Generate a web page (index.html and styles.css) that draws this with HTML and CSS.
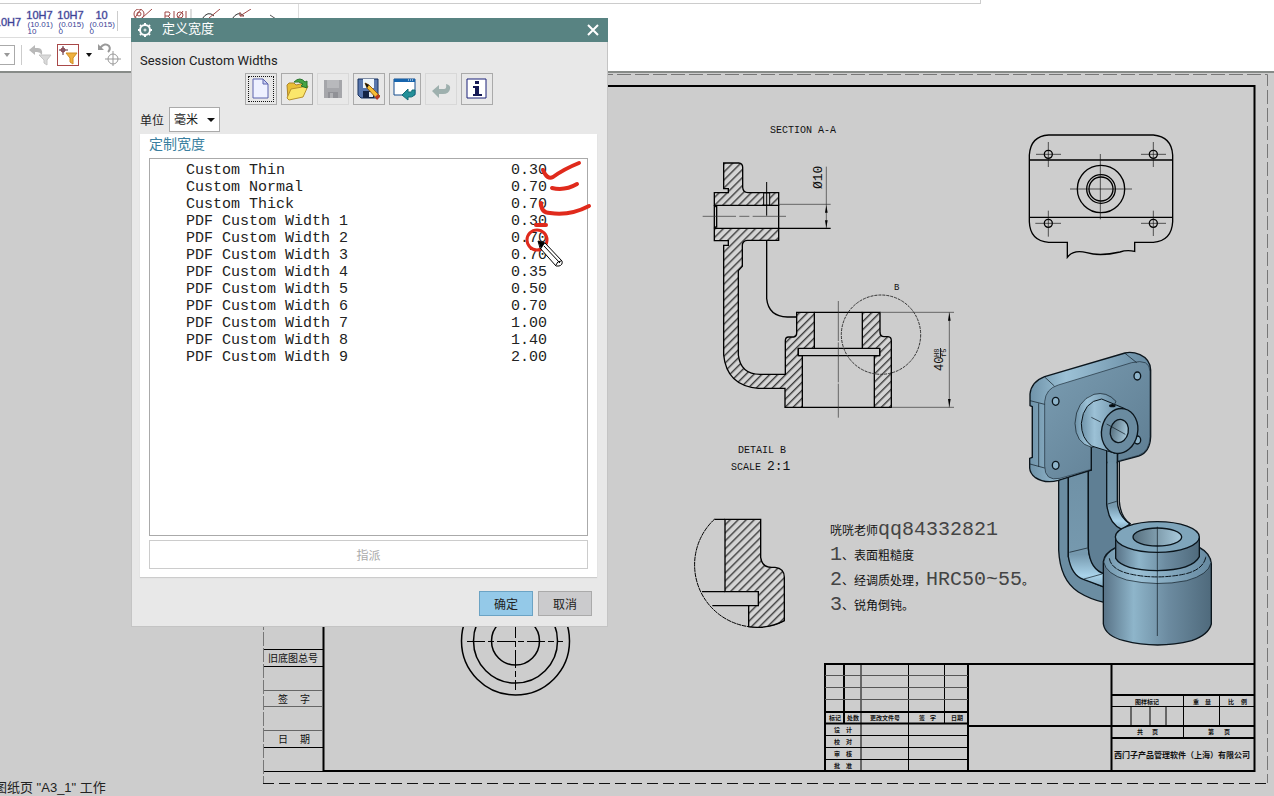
FILE: index.html
```html
<!DOCTYPE html>
<html lang="zh-CN">
<head>
    <meta charset="utf-8">
    <title>定义宽度</title>
    <link rel="stylesheet" href="styles.css">
</head>
<body>
    <header class="toolbars">
        <div class="ribbon-edge"></div>
        <div class="toolbar toolbar-top">
            <button type="button" class="tol single"><b>10H7</b></button>
            <button type="button" class="tol"><b>10H7</b><span>(10.01)</span><span>10</span></button>
            <button type="button" class="tol"><b>10H7</b><span>(0.015)</span><span>0</span></button>
            <button type="button" class="tol"><b>10</b><span>(0.015)</span><span>0</span></button>
            <i class="sep"></i>
            <svg class="marks" viewBox="0 0 160 24" fill="none" stroke="#a04846">
                <circle cx="10" cy="5" r="5"/><circle cx="10" cy="5" r="2"/><path d="M5 10 12 0M13 9 23 0"/>
                <path d="M36 10V3h4q2 1 0 4h-4m3 0 3 3M45 2v8M57 2v8M48 10 54 2"/><circle cx="51" cy="6" r="3"/>
                <path d="M62 0v10" stroke="#bbb"/>
                <path d="M73 10q6-9 12-3" stroke="#333"/><path d="M80 9 91 0"/>
                <path d="M103 10q6-9 12-3" stroke="#333"/><path d="M111 7 122 0m-11 3v4h4"/>
                <path d="m141 6 6 4-4 3" stroke="#555"/>
            </svg>
        </div>
        <div class="toolbar toolbar-bottom">
            <button type="button" class="drop" aria-label="类型"></button>
            <i class="sep"></i>
            <button type="button" class="tool" aria-label="重置过滤器">
                <svg width="24" height="24" viewBox="0 0 24 24">
                    <path d="m1 7 6-5v3h3q5 0 4 7-2-3-5-3H7v3z" fill="#b9b9b9"/>
                    <path d="M11 12h12l-4 5v5l-3-2v-3z" fill="#d9d9d9" stroke="#c4c4c4"/>
                </svg>
            </button>
            <button type="button" class="tool active" aria-label="过滤器">
                <svg width="20" height="20" viewBox="0 0 20 20">
                    <path d="M5 1v9M1 5h9" stroke="#55263a"/><circle cx="5" cy="5" r="2" fill="none" stroke="#7c2c35"/>
                    <path d="M8 8h11l-4 5v6l-3-2v-4z" fill="#efb13f" stroke="#d08e25"/>
                </svg>
            </button>
            <button type="button" class="caret" aria-label="更多"></button>
            <button type="button" class="tool" aria-label="捕捉">
                <svg width="24" height="26" viewBox="0 0 24 26" fill="none" stroke="#999">
                    <path d="M2 6q5-6 9-2 2 3-1 6" stroke-width="2"/><path d="M0 2v6h6z" fill="#999" stroke="none"/>
                    <circle cx="15" cy="17" r="5"/><path d="M15 9v15M7 17h16"/>
                </svg>
            </button>
        </div>
    </header>

    <main class="canvas">
        <svg class="sheet" viewBox="0 73 1274 723" preserveAspectRatio="xMinYMin meet">
            <defs>
                <pattern id="hatch" width="17" height="17" patternUnits="userSpaceOnUse" patternTransform="rotate(45)">
                    <rect width="17" height="17" fill="#d5d5d5"/>
                    <path d="M8 0V17" stroke="#000" stroke-width="3"/>
                </pattern>
                <linearGradient id="body" x1="0" x2="1">
                    <stop offset="0" stop-color="#587286"/><stop offset=".28" stop-color="#8eb5ca"/>
                    <stop offset=".6" stop-color="#6c8ba0"/><stop offset="1" stop-color="#4f6a7c"/>
                </linearGradient>
                <linearGradient id="bore" x1="0" x2="1">
                    <stop offset="0" stop-color="#57707f"/><stop offset="1" stop-color="#a9cbdd"/>
                </linearGradient>
                <linearGradient id="face" x1="0" x2="1" y1="0" y2="1">
                    <stop offset="0" stop-color="#7a9cb1"/><stop offset="1" stop-color="#5d7c91"/>
                </linearGradient>
                <linearGradient id="bend" x1="0" x2="0" y1="0" y2="1">
                    <stop offset="0" stop-color="#6f91a6"/><stop offset=".72" stop-color="#7699ae"/><stop offset=".9" stop-color="#a9d3ea"/><stop offset="1" stop-color="#82a8be"/>
                </linearGradient>
                <linearGradient id="rim" x1="0" x2="1">
                    <stop offset="0" stop-color="#6f93a9"/><stop offset=".3" stop-color="#9cc1d6"/><stop offset="1" stop-color="#6689a0"/>
                </linearGradient>
            </defs>

            <!-- sheet border and frame -->
            <g fill="none" stroke="#777">
                <path d="M131 74.500H1267.500V783" stroke-dasharray="14 4"/>
                <path d="M263.500 600V783" stroke-dasharray="14 2"/>
                <path d="M263 783.500H1268" stroke="#111" stroke-dasharray="11 5"/>
            </g>
            <path d="M323.500 600V771H1254.500V86H323" fill="none" stroke="#000" stroke-width="2"/>

            <!-- side strip -->
            <path d="M264 649.500H323M264 666.500H323M264 747.500H323M264 771.500H323" stroke="#000"/>
            <path d="M264 690.500H323M264 706.500H323M264 730.500H323" stroke="#666"/>
            <g class="cad">
                <text x="268" y="662" font-size="10">旧底图总号</text>
                <text x="278" y="703" font-size="10">签</text><text x="300" y="703" font-size="10">字</text>
                <text x="278" y="743" font-size="10">日</text><text x="300" y="743" font-size="10">期</text>
            </g>

            <!-- bottom view -->
            <g fill="none" stroke="#000" stroke-width="1.500">
                <circle cx="515.500" cy="641" r="54"/>
                <circle cx="515.500" cy="641" r="42"/>
                <circle cx="515.500" cy="641" r="24"/>
                <path d="M467 641.500H563M515.500 590V690" stroke-width="1" stroke-dasharray="18 3 6 3"/>
            </g>

            <!-- section A-A -->
            <svg x="680" y="100" width="300" height="320" viewBox="0 0 900 960">
                <g fill="url(#hatch)" stroke="#000" stroke-width="4">
                    <path d="M131 189H176Q188 190 188 202V262Q189 278 204 278H296V316H103V278H145V266H131Z"/>
                    <path d="M103 385H296V421H202Q188 422 187 435V499L175 512V765Q182 823 240 823H316V722Q316 711 326 711H341Q350 710 350 700V637H403V745H355V767H367V922H315V865H235Q140 857 131 765V436H145V422H103Z"/>
                    <path d="M547 637H600V698Q601 710 612 710H624Q634 711 634 722V922H583V767H599V745H547Z"/>
                </g>
                <rect x="251" y="279" width="18" height="36" fill="#cdcdcd" stroke="#000" stroke-width="3"/>
                <g fill="none" stroke="#000" stroke-width="4">
                    <path d="M103 316V385M296 316V385M110 318V383M103 316 110 322M103 385 110 379"/>
                    <path d="M260 422V596Q266 650 322 651H350"/>
                    <path d="M403 637H547M403 745H547M355 767H599M355 745V767M599 745V767M367 922H583"/>
                </g>
                <g fill="none" stroke="#333" stroke-width="2">
                    <path d="M68 349H327" stroke-dasharray="100 10 30 10"/>
                    <path d="M260 246V347" stroke="#000" stroke-width="3"/>
                    <path d="M475 603V953" stroke-dasharray="120 4"/>
                    <path d="M296 313H452M439 200V385M600 637H822M634 922H822M808 637V922"/>
                    <path d="M296 385H452" stroke="#000" stroke-width="4"/>
                    <circle cx="603" cy="704" r="119" stroke-dasharray="9 3" stroke-width="3"/>
                </g>
                <path d="m439 316-4 22h8zM439 383l-4-22h8zM808 638l-4 24h8zM808 921l-4-24h8z"/>
            </svg>
            <g class="cad mono">
                <text x="770" y="133" font-size="10">SECTION A-A</text>
                <text x="894" y="290" font-size="9">B</text>
                <text transform="translate(822 189) rotate(-90)" font-size="13">Ø10</text>
                <text transform="translate(943 371) rotate(-90)" font-size="12">40</text>
                <text transform="translate(939 357) rotate(-90)" font-size="7">H8</text>
                <text transform="translate(946 357) rotate(-90)" font-size="7">f5</text>
                <text x="738" y="453" font-size="10">DETAIL B</text>
                <text x="731" y="470" font-size="10">SCALE <tspan font-size="13">2:1</tspan></text>
            </g>
            <path d="M940.500 348V358" stroke="#222"/>

            <!-- plate, top view -->
            <svg x="1010" y="70" width="264" height="200" viewBox="0 0 792 600">
                <g fill="none" stroke="#000" stroke-width="4">
                    <path d="M172 517H116Q60 512 58 455V255Q62 198 116 195H430Q485 200 488 255V455Q485 512 430 517H374V544Q350 539 330 546 270 560 230 548 190 538 172 562Z"/>
                    <path d="M58 270H488M58 442H488"/>
                    <circle cx="273" cy="357" r="71"/><circle cx="273" cy="357" r="43"/><circle cx="273" cy="357" r="36"/>
                    <circle cx="115" cy="253" r="12"/><circle cx="430" cy="253" r="12"/>
                    <circle cx="115" cy="460" r="12"/><circle cx="430" cy="460" r="12"/>
                </g>
                <path d="M78 253H153M115 216V291M393 253H468M430 216V291M76 460H153M115 422V500M393 460H468M430 422V498M180 357H366M271 252V448" stroke="#111" stroke-width="2"/>
            </svg>

            <!-- detail B -->
            <svg x="680" y="430" width="120" height="210" viewBox="0 0 360 630">
                <path d="M103 268A187 187 0 0 0 314 572" fill="none" stroke="#000" stroke-width="3" stroke-dasharray="14 2"/>
                <path d="M135 268H242V382Q246 412 275 412H285Q313 415 313 442V572Q280 590 240 592 222 593 206 590V527H235V485H135Z" fill="url(#hatch)" stroke="#000" stroke-width="4"/>
                <path d="M103 268H135M66 485H135M97 527H206" stroke="#000" stroke-width="4"/>
            </svg>

            <g class="cad note">
                <text x="830" y="535">咣咣老师<tspan class="wide">qq84332821</tspan></text>
                <text x="830" y="560"><tspan class="wide">1</tspan>、表面粗糙度</text>
                <text x="830" y="585"><tspan class="wide">2</tspan>、经调质处理，<tspan class="wide">HRC50~55</tspan>。</text>
                <text x="830" y="610"><tspan class="wide">3</tspan>、锐角倒钝。</text>
            </g>

            <!-- shaded bracket -->
            <svg x="1010" y="340" width="220" height="320" viewBox="0 0 660 960">
                <g stroke="#0b151c" stroke-width="4" stroke-linejoin="round">
                    <path d="M146 408V630Q150 720 205 756 240 778 285 788V742Q190 712 175 650V400Z" fill="#6b8da2"/>
                    <path d="M175 400V650Q184 706 220 718L285 742V700Q240 682 235 625V390Z" fill="url(#bend)"/>
                    <path d="M235 390V625Q240 690 285 702L330 640 360 556Q300 540 290 490V310H244V390Z" fill="#5f7f94"/>
                    <path d="M290 320V490Q295 550 335 568L360 552Q324 528 322 482V335Z" fill="url(#bend)"/>
                    <path d="M328 360V484Q332 534 362 552" fill="none"/>
                    <path d="M60 197V162Q64 125 104 110L345 39Q366 34 390 44 421 58 422 90V290Q420 336 386 348L324 365V300H244V390L145 421Q105 432 75 412 60 400 59 384V355L67 352V200Z" fill="url(#rim)"/>
                    <path d="M104 185Q107 146 145 135L365 68Q420 55 420 95V290Q419 334 386 346L324 363V300H244V388L150 415Q104 425 104 378Z" fill="url(#face)" stroke="#1b2b36" stroke-width="2"/>
                    <path d="M60 182 104 193M60 372 104 384M104 111 133 138M345 40 380 68M67 200V352M86 190V380" fill="none" stroke-width="2"/>
                    <path d="M246 302H322V345H290V360H246Z" fill="#5f7f94" stroke="none"/>
                    <path d="M291 320H321V365H291Z" fill="#7092a7" stroke="none"/>
                    <path d="M244 318V390M290 325V370M322 335V370" fill="none"/>
                    <ellipse cx="137" cy="184" rx="10" ry="12" fill="#8fb5cb"/><ellipse cx="382" cy="108" rx="10" ry="12" fill="#8fb5cb"/>
                    <ellipse cx="137" cy="376" rx="10" ry="12" fill="#8fb5cb"/><ellipse cx="382" cy="300" rx="10" ry="12" fill="#8fb5cb"/>
                    <path d="M245 322Q196 310 195 250 198 182 252 163 290 153 318 184L250 322Z" fill="url(#rim)" stroke-width="2"/>
                    <path d="M214 250Q220 184 275 177L345 206 315 340 245 318Q214 295 214 250Z" fill="url(#rim)" stroke-width="3"/>
                    <ellipse cx="329" cy="273" rx="54" ry="68" transform="rotate(12 329 273)" fill="#6a8ba0"/>
                    <ellipse cx="328" cy="273" rx="27" ry="35" transform="rotate(12 328 273)" fill="url(#bore)"/>
                    <ellipse cx="307" cy="197" rx="8" ry="3"/>
                    <path d="M244 232 272 246M290 252 346 283M178 637 232 624M222 717 276 702M293 492 320 484" fill="none" stroke-width="2"/>
                    <path d="M280 665Q282 640 318 622H568Q602 640 604 672V852Q596 884 545 902 442 928 342 902 286 888 280 852Z" fill="url(#body)"/>
                    <path d="M281 666Q286 640 318 624H568Q598 640 603 668 596 704 530 722 442 740 350 720 288 702 281 666Z" fill="url(#rim)" stroke-width="2"/>
                    <path d="M298 655Q304 692 370 704 442 718 520 703 582 690 588 648" fill="none" stroke-width="3" stroke-dasharray="18 3"/>
                    <path d="M317 592V655Q338 690 442 692 548 690 568 650V592Z" fill="url(#body)"/>
                    <ellipse cx="442" cy="591" rx="126" ry="46" fill="#7fa5bb"/>
                    <ellipse cx="442" cy="591" rx="73" ry="27" fill="url(#bore)"/>
                    <path d="M442 560V888" fill="none" stroke-width="2"/>
                </g>
            </svg>

            <!-- title block -->
            <g fill="none" stroke="#000">
                <path d="M825 771V664H1254M844 664V723M968 664V771M1111.500 664V771M968 726H1254M1111 695H1254M1111 738H1254M825 712H968M825 723.500H968" stroke-width="2"/>
                <path d="M861 664V771M908.500 664V771M944.500 664V723M825 735.500H968M825 747.500H968M825 759.500H968M1111 706.500H1254M1131 707V726M1150 707V726M1166 707V726M1183.500 695V738M1219.500 695V726"/>
                <path d="M825 675.500H968M825 687.500H968M825 699.500H968" stroke="#555"/>
            </g>
            <g class="cad tiny">
                <text x="829" y="720">标记</text><text x="847" y="720">处数</text><text x="870" y="720">更改文件号</text>
                <text x="919" y="720">签</text><text x="930" y="720">字</text><text x="951" y="720">日期</text>
                <text x="834" y="732">设</text><text x="846" y="732">计</text>
                <text x="834" y="744">校</text><text x="846" y="744">对</text>
                <text x="834" y="756">审</text><text x="846" y="756">核</text>
                <text x="834" y="768">批</text><text x="846" y="768">准</text>
                <text x="1135" y="704">图样标记</text>
                <text x="1193" y="704">重</text><text x="1205" y="704">量</text>
                <text x="1228" y="704">比</text><text x="1241" y="704">例</text>
                <text x="1137" y="734">共</text><text x="1152" y="734">页</text>
                <text x="1208" y="734">第</text><text x="1224" y="734">页</text>
                <text x="1114" y="758" font-size="8">西门子产品管理软件（上海）有限公司</text>
            </g>
            <text class="status" x="-6" y="792">图纸页 "A3_1" 工作</text>
        </svg>
    </main>

    <form class="dialog">
        <div class="titlebar">
            <svg width="16" height="16" viewBox="0 0 16 16" fill="none" stroke="#fff">
                <circle cx="8" cy="8" r="5" stroke-width="2"/><circle cx="8" cy="8" r="1"/>
                <path d="M8 1v2M8 13v2M1 8h2M13 8h2M3 3l1 1M12 12l1 1M13 3l-1 1M4 12l-1 1" stroke-width="2"/>
            </svg>
            <h1>定义宽度</h1>
            <button type="button" class="close" aria-label="关闭">
                <svg width="12" height="12" viewBox="0 0 12 12"><path d="M1 1 11 11M11 1 1 11" stroke="#fff" stroke-width="2"/></svg>
            </button>
        </div>
        <p class="session">Session Custom Widths</p>
        <div class="actions">
            <button type="button" class="focused" aria-label="新建">
                <svg viewBox="0 0 24 24"><path d="M4 2h10l5 5v14H4z" fill="#eef1ff" stroke="#5a62ad"/><path d="M14 2v5h5z" fill="#c9d0f3" stroke="#5a62ad"/></svg>
            </button>
            <button type="button" aria-label="打开">
                <svg viewBox="0 0 24 24"><path d="M2 8 4 6h5l2 2 9-2v4l-3 9-14 3z" fill="#e9bf36" stroke="#ac852b"/><path d="M2 21 6 12l17-3-5 11-14 3z" fill="#fbe66b" stroke="#b8912e"/><path d="M9 5q6-6 11 0l2-1v7l-6-2 2-2q-4-3-9-2z" fill="#45a445" stroke="#28752d"/></svg>
            </button>
            <button type="button" disabled aria-label="保存">
                <svg viewBox="0 0 24 24"><path d="M3 3h18v18H3z" fill="#a5a6aa"/><path d="M6 3h12v8H6z" fill="#b8b9bc"/><path d="M7 15h10v6H7z" fill="#909196"/><path d="M9 16h3v5H9z" fill="#b0b1b4"/></svg>
            </button>
            <button type="button" aria-label="另存为">
                <svg viewBox="0 0 24 24"><path d="M1 2h20v19H4l-3-3z" fill="#5876ad" stroke="#16305f"/><path d="M6 2h11v9H6z" fill="#edf5fc"/><path d="M6 14h11v7H6z" fill="#142444"/><path d="M12 15h4v5h-4z" fill="#dde6f0"/><path d="m8 6 2 5 10 11 3-3L12 8z" fill="#f5bd35" stroke="#966016"/><path d="m8 6 2 5 2-3z" fill="#111"/><path d="m18 20 2 3 3-3-2-3z" fill="#b83724"/></svg>
            </button>
            <button type="button" aria-label="应用">
                <svg viewBox="0 0 24 24"><path d="M1 2h21v16H1z" fill="#fff" stroke="#154d8d"/><path d="M1 2h21v3H1z" fill="#1765ad"/><path d="M15 3h1m1 0h1m1 0h1" stroke="#fff"/><path d="m9 18 6-6v3h3q1 0 1-2h3q1 8-7 7v3z" fill="#239099" stroke="#136c76"/></svg>
            </button>
            <button type="button" disabled aria-label="撤消">
                <svg viewBox="0 0 24 24"><path d="m3 14 7-6v4h5q3 0 2-5 5 1 4 5-1 5-7 5h-4v4z" fill="#9eb0ae"/></svg>
            </button>
            <button type="button" aria-label="信息">
                <svg viewBox="0 0 24 24"><path d="M2 2h19v19H2z" fill="#fff" stroke="#1b2179"/><path d="M10 4h4v3h-4zM8 9h6v8h3v2H8v-2h2v-6H8z" fill="#151955"/></svg>
            </button>
        </div>
        <div class="unit-row">
            <label for="unit">单位</label>
            <span class="select-box">
                <select id="unit"><option>毫米</option><option>英寸</option></select>
            </span>
        </div>
        <section class="panel">
            <h2>定制宽度</h2>
            <div class="list">
                <table>
                    <tr><td>Custom Thin</td><td>0.30</td></tr>
                    <tr><td>Custom Normal</td><td>0.70</td></tr>
                    <tr><td>Custom Thick</td><td>0.70</td></tr>
                    <tr><td>PDF Custom Width 1</td><td>0.30</td></tr>
                    <tr><td>PDF Custom Width 2</td><td>0.70</td></tr>
                    <tr><td>PDF Custom Width 3</td><td>0.70</td></tr>
                    <tr><td>PDF Custom Width 4</td><td>0.35</td></tr>
                    <tr><td>PDF Custom Width 5</td><td>0.50</td></tr>
                    <tr><td>PDF Custom Width 6</td><td>0.70</td></tr>
                    <tr><td>PDF Custom Width 7</td><td>1.00</td></tr>
                    <tr><td>PDF Custom Width 8</td><td>1.40</td></tr>
                    <tr><td>PDF Custom Width 9</td><td>2.00</td></tr>
                </table>
            </div>
            <button type="button" class="assign" disabled>指派</button>
        </section>
        <div class="buttons">
            <button type="button" class="ok">确定</button>
            <button type="button">取消</button>
        </div>

        <!-- pen marks over the list -->
        <svg class="ink" width="72" height="120" viewBox="0 0 72 120">
            <g fill="none" stroke="#e02a1c" stroke-width="4" stroke-linecap="round">
                <path d="M23 20Q27 30 33 27 44 19 59 13"/>
                <path d="M32 38Q45 41 57 34"/>
                <path d="M21 53Q21 63 30 63 50 66 69 56"/>
                <path d="M16 75H26"/>
                <circle cx="17" cy="90" r="10" stroke-width="3"/>
            </g>
            <path d="m18 91 7 2 17 18q1 4-3 5h-3L20 98z" fill="#fff" stroke="#000"/>
            <path d="m18 91 7 2-4 6z"/>
            <path d="m24 96 16 17M36 115q1-4 5-4" fill="none" stroke="#000"/>
        </svg>
    </form>
</body>
</html>
```
FILE: styles.css
```css
* {
    box-sizing: border-box;
}

body {
    margin: 0;
    height: 100vh;
    display: flex;
    flex-direction: column;
    overflow: hidden;
    position: relative;
    background: #cdcdcd;
    color: #222;
    font-family: Roboto, "Noto Sans CJK SC", sans-serif;
    font-size: 12px;
}

button, select {
    font: inherit;
    color: inherit;
    padding: 0;
}

h1, h2, p {
    margin: 0;
    font-weight: normal;
}

/* Toolbars */
.toolbars {
    background: #fff;
    border-bottom: 2px solid #878b88;
}

.ribbon-edge {
    width: 77%;
    height: 4px;
    border-right: 1px solid #ccc;
    border-bottom: 1px solid #ccc;
}

.toolbar {
    display: flex;
    align-items: center;
}

.toolbar button {
    border: none;
    background: none;
}

.toolbar-top {
    width: 299px;
    height: 34px;
    border-right: 1px solid #ddd;
    border-bottom: 1px solid #ddd;
}

.toolbar-bottom {
    height: 33px;
}

.toolbar .tol {
    display: flex;
    flex-direction: column;
    align-items: center;
    width: 31px;
    padding-top: 2px;
    color: #3b3f96;
    font-family: "Liberation Sans", sans-serif;
    font-size: 8px;
    line-height: 7px;
}

.tol b {
    font-size: 11px;
    line-height: 12px;
    font-weight: normal;
    -webkit-text-stroke: 1px #3b3f9655;
}

.tol span {
    width: 24px;
    text-align: left;
}

.toolbar .single {
    width: 26px;
    margin-left: -5px;
    margin-right: 3px;
}

.sep {
    width: 1px;
    height: 20px;
    background: #ccc;
}

.marks {
    width: 160px;
    height: 24px;
    margin-left: 11px;
}

.drop {
    width: 15px;
    height: 20px;
    margin-right: 6px;
}

.toolbar .drop {
    border: 1px solid #aaa;
    border-left: none;
}

.drop::after, .caret::after {
    content: "";
    display: block;
    width: 0;
    margin: auto;
    border: 3px solid transparent;
    border-top: 4px solid #999;
    border-bottom: none;
}

.caret {
    width: 19px;
}

.caret::after {
    border-top-color: #111;
}

.tool {
    display: flex;
    align-items: center;
    justify-content: center;
    width: 24px;
    height: 26px;
    margin-left: 6px;
}

.toolbar .active {
    width: 22px;
    height: 22px;
    margin-left: 5px;
    border: 1px solid #a94848;
}

.caret + .tool {
    margin-left: 0;
}

/* Drawing */
.canvas {
    flex: 1;
    min-height: 0;
}

.sheet {
    display: block;
    width: 100%;
    height: 100%;
}

.cad {
    font-family: "Noto Sans CJK SC", sans-serif;
    fill: #111;
}

.mono {
    font-family: "Liberation Mono", monospace;
}

.note {
    font-size: 12px;
}

.wide {
    font-family: "Liberation Mono", monospace;
    font-size: 20px;
    fill: #444;
}

.tiny {
    font-size: 6px;
    font-weight: bold;
}

.status {
    font-family: "Liberation Sans", "Noto Sans CJK SC", sans-serif;
    font-size: 13px;
    fill: #222;
}

/* Dialog */
.dialog {
    position: absolute;
    left: 131px;
    top: 18px;
    width: 477px;
    display: flex;
    flex-direction: column;
    background: #e8e8e8;
    border: 1px solid #c4c4c4;
    border-top: none;
    padding-bottom: 10px;
}

.titlebar {
    display: flex;
    align-items: center;
    gap: 9px;
    height: 24px;
    margin: 0 -1px;
    padding: 0 9px 0 6px;
    background: #588382;
    color: #fff;
}

.titlebar h1 {
    flex: 1;
    font-size: 13px;
    line-height: 22px;
    padding-bottom: 2px;
}

.close {
    display: flex;
    border: none;
    background: none;
}

.session {
    padding: 10px 8px 0;
    font-size: 13px;
    line-height: 18px;
}

.actions {
    display: flex;
    justify-content: center;
    gap: 4px;
    margin-top: 3px;
    padding-right: 2px;
}

.actions button {
    width: 32px;
    height: 32px;
    padding: 3px;
    border: 1px solid #aaa;
    background: #e8e8e8;
}

.actions button:disabled {
    border-color: #d8d8d8;
}

.actions svg {
    display: block;
    width: 24px;
    height: 24px;
}

.actions .focused {
    outline: 1px dotted #111;
    outline-offset: -4px;
}

.unit-row {
    display: flex;
    align-items: center;
    gap: 5px;
    margin-top: 2px;
    padding-left: 8px;
}

.select-box {
    position: relative;
}

.select-box::after {
    content: "";
    position: absolute;
    right: 5px;
    top: 11px;
    border: 4px solid transparent;
    border-top-color: #111;
    pointer-events: none;
}

.select-box select {
    display: block;
    width: 51px;
    height: 25px;
    padding-left: 4px;
    appearance: none;
    border: 1px solid #aaa;
    border-radius: 0;
    background: #fff;
}

.panel {
    margin: 2px 10px 0 8px;
    padding: 0 9px 8px;
    background: #fff;
    box-shadow: 0 1px 1px #ccc;
}

.panel h2 {
    color: #3a7fa0;
    font-size: 14px;
    line-height: 20px;
}

.list {
    height: 378px;
    margin-top: 4px;
    padding: 3px 40px 0 36px;
    border: 1px solid #aaa;
}

.list table {
    width: 100%;
    border-collapse: collapse;
    font-family: "Liberation Mono", monospace;
    font-size: 15px;
    line-height: 17px;
}

.list td {
    padding: 0;
}

.list td:last-child {
    text-align: right;
}

.assign {
    display: block;
    width: 100%;
    height: 29px;
    margin-top: 4px;
    border: 1px solid #ccc;
    background: #fff;
}

.assign:disabled {
    color: #aaa;
}

.buttons {
    display: flex;
    justify-content: flex-end;
    gap: 5px;
    margin-top: 14px;
    padding-right: 15px;
}

.buttons button {
    width: 54px;
    height: 25px;
    border: 1px solid #aaa;
    background: #cbcbcd;
}

.buttons .ok {
    border-color: #6ba3c4;
    background: #94c9e8;
}

.ink {
    position: absolute;
    left: 388px;
    top: 132px;
}
```
